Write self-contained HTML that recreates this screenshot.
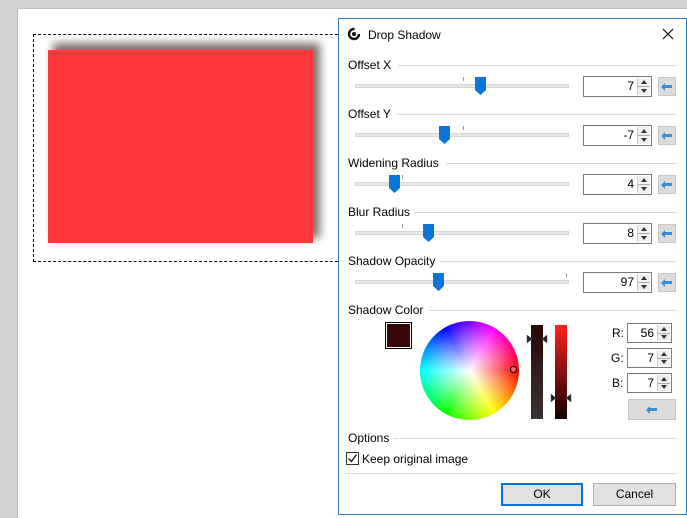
<!DOCTYPE html>
<html><head><meta charset="utf-8"><style>
*{box-sizing:border-box;margin:0;padding:0}
body{width:687px;height:518px;background:#d2d2d2;position:relative;overflow:hidden;font-family:"Liberation Sans",sans-serif;font-size:12px;color:#000}
.a{position:absolute}
.lbl{position:absolute;left:348px;font-size:12px;line-height:14px}
.line{position:absolute;height:1px;background:#dcdcdc;right:10px}
.track{position:absolute;left:355px;width:214px;height:4px;background:#e7e7e7;border:1px solid #d6d6d6}
.tick{position:absolute;width:1px;height:4px;background:#999}
.thumb{position:absolute;width:11px;height:18px}
.inp{position:absolute;left:583px;width:69px;height:21px;border:1px solid #7a7a7a;background:#fff;text-align:right;padding-right:17px;line-height:19px;font-size:12px}
.spin{position:absolute;right:1px;top:1px;width:13px;height:17px;background:#f0f0f0;border-left:1px solid #ccc}
.spin:before{content:"";position:absolute;left:3px;top:2px;border:3px solid transparent;border-bottom:4px solid #333;border-top:0}
.spin:after{content:"";position:absolute;left:3px;bottom:2px;border:3px solid transparent;border-top:4px solid #333;border-bottom:0}
.spin i{position:absolute;left:0;right:0;top:8px;height:1px;background:#aaa}
.rst{position:absolute;left:658px;width:18px;height:19px;background:#dcdcdc;border:1px solid #c8c8c8}
.rst:after{content:"";position:absolute;left:50%;top:50%;width:8px;height:3px;margin:-2px 0 0 -3px;background:#3a8fd8;}
.rst:before{content:"";position:absolute;left:50%;top:50%;margin:-4px 0 0 -6px;border:4px solid transparent;border-right:4px solid #3a8fd8;border-left:0}
.btn{position:absolute;top:483px;height:23px;background:#e1e1e1;border:1px solid #adadad;text-align:center;line-height:21px;font-size:12px}
</style></head><body>
<div class="a" style="left:17px;top:8px;width:670px;height:510px;background:#fff;border-left:1px solid #bbb;border-top:1px solid #c4c4c4"></div>
<div class="a" style="left:48px;top:50px;width:265px;height:193px;background:#ff363c;box-shadow:6px -6px 8px 1px rgba(50,15,15,0.6)"></div>
<div class="a" style="left:33px;top:34px;width:320px;height:228px;border:1px dashed #000"></div>

<div class="a" style="left:338px;top:18px;width:349px;height:497px;background:#fff;border:1px solid #2d7bbf"></div>
<svg class="a" style="left:347px;top:27px" width="14" height="14" viewBox="0 0 14 14"><circle cx="7" cy="7" r="5" fill="none" stroke="#111" stroke-width="2.4" stroke-dasharray="24 8"/><circle cx="7" cy="7" r="2" fill="#111"/></svg>
<div class="a" style="left:368px;top:28px;font-size:12px">Drop Shadow</div>
<svg class="a" style="left:662px;top:28px" width="12" height="12"><path d="M1 1L11 11M11 1L1 11" stroke="#111" stroke-width="1.2"/></svg>

<div class="lbl" style="top:58px">Offset X</div><div class="line" style="left:398px;top:65px"></div>
<div class="track" style="top:84px"></div><div class="tick" style="left:463px;top:77px"></div>
<svg class="thumb" style="left:475px;top:77px" viewBox="0 0 11 18"><path d="M0 0H11V13L5.5 18L0 13Z" fill="#0a74d9"/></svg>
<div class="inp" style="top:76px">7<div class="spin"><i></i></div></div><div class="rst" style="top:77px"></div>

<div class="lbl" style="top:107px">Offset Y</div><div class="line" style="left:397px;top:114px"></div>
<div class="track" style="top:133px"></div><div class="tick" style="left:463px;top:126px"></div>
<svg class="thumb" style="left:439px;top:126px" viewBox="0 0 11 18"><path d="M0 0H11V13L5.5 18L0 13Z" fill="#0a74d9"/></svg>
<div class="inp" style="top:125px">-7<div class="spin"><i></i></div></div><div class="rst" style="top:126px"></div>

<div class="lbl" style="top:156px">Widening Radius</div><div class="line" style="left:446px;top:163px"></div>
<div class="track" style="top:182px"></div><div class="tick" style="left:402px;top:175px"></div>
<svg class="thumb" style="left:389px;top:175px" viewBox="0 0 11 18"><path d="M0 0H11V13L5.5 18L0 13Z" fill="#0a74d9"/></svg>
<div class="inp" style="top:174px">4<div class="spin"><i></i></div></div><div class="rst" style="top:175px"></div>

<div class="lbl" style="top:205px">Blur Radius</div><div class="line" style="left:413px;top:212px"></div>
<div class="track" style="top:231px"></div><div class="tick" style="left:402px;top:224px"></div>
<svg class="thumb" style="left:423px;top:224px" viewBox="0 0 11 18"><path d="M0 0H11V13L5.5 18L0 13Z" fill="#0a74d9"/></svg>
<div class="inp" style="top:223px">8<div class="spin"><i></i></div></div><div class="rst" style="top:224px"></div>

<div class="lbl" style="top:254px">Shadow Opacity</div><div class="line" style="left:439px;top:261px"></div>
<div class="track" style="top:280px"></div><div class="tick" style="left:566px;top:273px"></div>
<svg class="thumb" style="left:433px;top:273px" viewBox="0 0 11 18"><path d="M0 0H11V13L5.5 18L0 13Z" fill="#0a74d9"/></svg>
<div class="inp" style="top:272px">97<div class="spin"><i></i></div></div><div class="rst" style="top:273px"></div>

<div class="lbl" style="top:303px">Shadow Color</div><div class="line" style="left:428px;top:310px"></div>
<div class="a" style="left:385px;top:322px;width:27px;height:27px;border:1px solid #000;outline:1px solid #fff;outline-offset:-2px;background:#380707"></div>
<div class="a" style="left:420px;top:321px;width:99px;height:99px;border-radius:50%;background:radial-gradient(circle,#fff 0%,rgba(255,255,255,0) 70%),conic-gradient(from 90deg,#f00,#ff0 ,#0f0,#0ff,#00f,#f0f,#f00)"></div>
<div class="a" style="left:510px;top:366px;width:7px;height:7px;border:1px solid #000;border-radius:50%;background:#f66"></div>
<div class="a" style="left:531px;top:325px;width:12px;height:94px;background:linear-gradient(#2a0505,#3a3434)"></div>
<div class="a" style="left:555px;top:325px;width:12px;height:94px;background:linear-gradient(#ff2020,#100000)"></div>
<svg class="a" style="left:526px;top:334px" width="22" height="10"><path d="M1 1L6 5L1 9Z M21 1L16 5L21 9Z" fill="#222" stroke="#555" stroke-width="0.5"/></svg>
<svg class="a" style="left:550px;top:393px" width="22" height="10"><path d="M1 1L6 5L1 9Z M21 1L16 5L21 9Z" fill="#222" stroke="#555" stroke-width="0.5"/></svg>
<div class="a" style="left:612px;top:326px">R:</div>
<div class="a" style="left:611px;top:351px">G:</div>
<div class="a" style="left:612px;top:376px">B:</div>
<div class="inp" style="left:627px;top:323px;width:45px;height:20px;line-height:18px">56<div class="spin" style="height:16px"><i></i></div></div>
<div class="inp" style="left:627px;top:348px;width:45px;height:20px;line-height:18px">7<div class="spin" style="height:16px"><i></i></div></div>
<div class="inp" style="left:627px;top:373px;width:45px;height:20px;line-height:18px">7<div class="spin" style="height:16px"><i></i></div></div>
<div class="rst" style="left:628px;top:399px;width:48px;height:21px"></div>

<div class="lbl" style="top:431px">Options</div><div class="line" style="left:394px;top:438px"></div>
<div class="a" style="left:346px;top:452px;width:13px;height:13px;border:1px solid #333;background:#fff"></div>
<svg class="a" style="left:347px;top:453px" width="11" height="11"><path d="M1.5 5.5L4.5 8.5L9.5 1.5" fill="none" stroke="#111" stroke-width="1.3"/></svg>
<div class="a" style="left:362px;top:452px">Keep original image</div>
<div class="line" style="left:346px;top:473px"></div>
<div class="btn" style="left:501px;width:82px;border:2px solid #0a74d9;line-height:19px">OK</div>
<div class="btn" style="left:593px;width:83px">Cancel</div>
</body></html>
